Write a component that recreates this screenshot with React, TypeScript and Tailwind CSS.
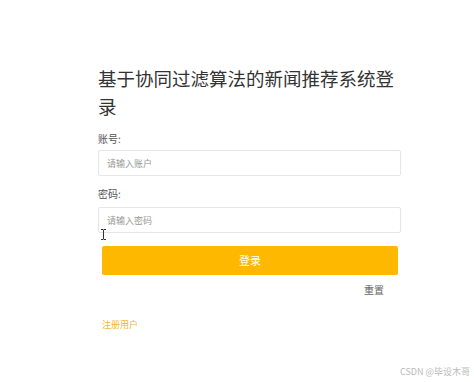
export default function App() {
  return (
    <div
      className="relative h-[382px] w-[474px] overflow-hidden bg-white text-[#333]"
      style={{ fontFamily: '"Noto Sans CJK SC", "Noto Sans", sans-serif' }}
    >
      <div className="ml-[98px] w-[303px] pt-[64px]">
        <h1 className="text-[18.5px] font-normal leading-[28px] text-[#333]">
          基于协同过滤算法的新闻推荐系统登录
        </h1>

        <label htmlFor="username" className="mt-[12px] block text-[10px] leading-[14px] text-[#555]">
          账号:
        </label>
        <input
          id="username"
          type="text"
          placeholder="请输入账户"
          className="mt-[4px] block h-[26px] w-full rounded-[2px] border border-[#e6e6e6] bg-white px-[8px] text-[9px] outline-none placeholder:text-[#999]"
        />

        <label htmlFor="password" className="mt-[11px] block text-[10px] leading-[14px] text-[#555]">
          密码:
        </label>
        <input
          id="password"
          type="password"
          placeholder="请输入密码"
          className="mt-[6px] block h-[26px] w-full rounded-[2px] border border-[#e6e6e6] bg-white px-[8px] text-[9px] outline-none placeholder:text-[#999]"
        />

        <button
          type="button"
          className="mx-[4px] mt-[13px] block h-[29px] w-[296px] rounded-[2px] bg-[#ffb800] text-[11px] text-white"
        >
          登录
        </button>

        <div className="mt-[8px] flex justify-end pr-[17px] leading-[14px]">
          <a href="#" className="text-[10px] leading-[14px] text-[#666]">
            重置
          </a>
        </div>

        <div className="mt-[21px] pl-[4px] leading-[14px]">
          <a href="#" className="block text-[9px] leading-[14px] text-[#f2b531]">
            注册用户
          </a>
        </div>
      </div>

      {/* text cursor left in the screenshot */}
      <svg
        className="absolute left-[100px] top-[229px]"
        width="7"
        height="11"
        viewBox="0 0 7 11"
        fill="none"
        stroke="#333"
        strokeWidth="1"
      >
        <path d="M1 0.5h2l0.5 0.5 0.5-0.5h2M3.5 1v9M1 10.5h2l0.5-0.5 0.5 0.5h2" />
      </svg>

      <span className="absolute bottom-[5px] right-[4px] text-[9px] leading-[10px] text-[#bbb]">
        CSDN @毕设木哥
      </span>
    </div>
  );
}
